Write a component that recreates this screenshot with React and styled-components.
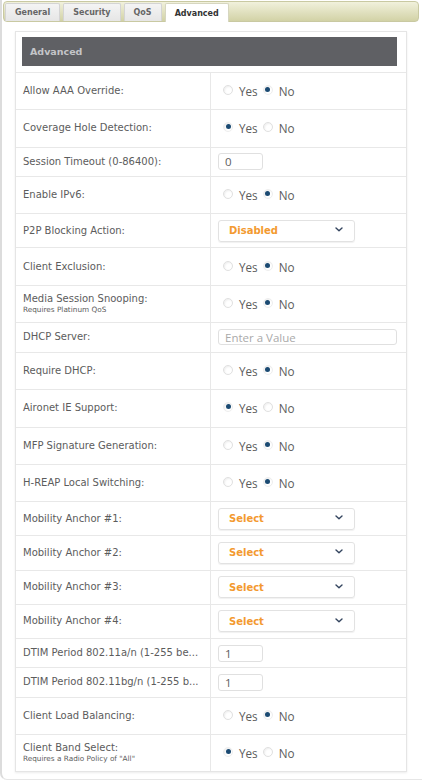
import React from "react";
import styled, { createGlobalStyle } from "styled-components";

const GlobalStyle = createGlobalStyle`
  * { box-sizing: border-box; }
  body {
    margin: 0;
    background: #fff;
    font-family: "DejaVu Sans", Verdana, sans-serif;
  }
`;

const tabs = ["General", "Security", "QoS", "Advanced"];

const rows = [
  { label: "Allow AAA Override:", type: "radio", value: "no" },
  { label: "Coverage Hole Detection:", type: "radio", value: "yes" },
  { label: "Session Timeout (0-86400):", type: "input", value: "0" },
  { label: "Enable IPv6:", type: "radio", value: "no" },
  { label: "P2P Blocking Action:", type: "select", value: "Disabled" },
  { label: "Client Exclusion:", type: "radio", value: "no" },
  {
    label: "Media Session Snooping:",
    note: "Requires Platinum QoS",
    type: "radio",
    value: "no",
  },
  { label: "DHCP Server:", type: "wide", placeholder: "Enter a Value" },
  { label: "Require DHCP:", type: "radio", value: "no" },
  { label: "Aironet IE Support:", type: "radio", value: "yes" },
  { label: "MFP Signature Generation:", type: "radio", value: "no" },
  { label: "H-REAP Local Switching:", type: "radio", value: "no" },
  { label: "Mobility Anchor #1:", type: "select", value: "Select" },
  { label: "Mobility Anchor #2:", type: "select", value: "Select" },
  { label: "Mobility Anchor #3:", type: "select", value: "Select" },
  { label: "Mobility Anchor #4:", type: "select", value: "Select" },
  { label: "DTIM Period 802.11a/n (1-255 be...", type: "input", value: "1" },
  { label: "DTIM Period 802.11bg/n (1-255 b...", type: "input", value: "1" },
  { label: "Client Load Balancing:", type: "radio", value: "no" },
  {
    label: "Client Band Select:",
    note: 'Requires a Radio Policy of "All"',
    type: "radio",
    value: "yes",
  },
];

const rowHeights = {
  radio: 37.3,
  select: 34.2,
  input: 29.3,
  wide: 30,
};

function Chevron() {
  return (
    <svg width="8" height="5" viewBox="0 0 8 5">
      <path
        d="M1 1 L4 3.8 L7 1"
        fill="none"
        stroke="#34455f"
        strokeWidth="1.4"
        strokeLinecap="round"
        strokeLinejoin="round"
      />
    </svg>
  );
}

function YesNo({ value }) {
  return (
    <StyledRadioGroup>
      <StyledRadio $checked={value === "yes"} />
      <StyledRadioText>Yes</StyledRadioText>
      <StyledRadio $checked={value === "no"} />
      <StyledRadioText>No</StyledRadioText>
    </StyledRadioGroup>
  );
}

function Field({ row }) {
  if (row.type === "radio") return <YesNo value={row.value} />;
  if (row.type === "select")
    return (
      <StyledSelect>
        <span>{row.value}</span>
        <Chevron />
      </StyledSelect>
    );
  if (row.type === "wide")
    return <StyledInput $wide readOnly placeholder={row.placeholder} />;
  return <StyledInput readOnly value={row.value} />;
}

export default function App() {
  return (
    <>
      <GlobalStyle />
      <StyledFrame>
        <StyledTabBar>
          {tabs.map((t) => (
            <StyledTab key={t} $active={t === "Advanced"}>
              {t}
            </StyledTab>
          ))}
        </StyledTabBar>
        <StyledCard>
          <StyledHeader>Advanced</StyledHeader>
          {rows.map((row) => (
            <StyledRow key={row.label} $h={rowHeights[row.type]}>
              <StyledLabelCell>
                <StyledLabel>{row.label}</StyledLabel>
                {row.note && <StyledNote>{row.note}</StyledNote>}
              </StyledLabelCell>
              <StyledValueCell>
                <Field row={row} />
              </StyledValueCell>
            </StyledRow>
          ))}
        </StyledCard>
      </StyledFrame>
    </>
  );
}

const StyledFrame = styled.div`
  width: 422px;
  padding: 1px 3px 7px 1px;
  border-left: 2px solid #dcdcdc;
  border-bottom: 1px solid #e6e6e6;
  border-bottom-left-radius: 7px;
`;

const StyledTabBar = styled.div`
  height: 21px;
  display: flex;
  align-items: flex-end;
  padding-left: 1px;
  background-image: linear-gradient(#f1f1dc, #d2d2a6);
  border: 1px solid #c9c9a2;
  border-radius: 4px;
`;

const StyledTab = styled.div`
  height: ${(p) => (p.$active ? "19px" : "18px")};
  margin-right: 3px;
  margin-bottom: ${(p) => (p.$active ? "-1px" : "0")};
  padding: 0 9px;
  display: flex;
  align-items: center;
  font-family: "DejaVu Sans", Verdana, sans-serif;
  font-size: 8px;
  font-weight: 700;
  color: ${(p) => (p.$active ? "#333" : "#666")};
  background: ${(p) =>
    p.$active ? "#fff" : "linear-gradient(#f4f4f4, #e6e6e6)"};
  border: 1px solid ${(p) => (p.$active ? "#d6d6c0" : "#d4d4d4")};
  border-bottom: none;
  border-radius: 2px 2px 0 0;
`;

const StyledCard = styled.div`
  margin: 9px 12px 0 12px;
  padding-top: 5px;
  background: #fff;
  border: 1px solid #e5e5e5;
  box-shadow: 0 1px 2px rgba(0, 0, 0, 0.08);
`;

const StyledHeader = styled.div`
  height: 29px;
  margin: 0 9px 6px 6px;
  padding-left: 8px;
  display: flex;
  align-items: center;
  background: #5f6064;
  color: #c4c5c8;
  font-size: 9.5px;
  font-weight: 700;
`;

const StyledRow = styled.div`
  height: ${(p) => p.$h}px;
  display: grid;
  grid-template-columns: 195px 1fr;
  border-top: 1px solid #e8e8e8;
`;

const StyledLabelCell = styled.div`
  padding-left: 7px;
  display: flex;
  flex-direction: column;
  justify-content: center;
  border-right: 1px solid #e8e8e8;
  overflow: hidden;
`;

const StyledLabel = styled.div`
  font-size: 10px;
  line-height: 12px;
  color: #5c5c5c;
  white-space: nowrap;
`;

const StyledNote = styled.div`
  font-size: 7.3px;
  line-height: 10px;
  color: #5c5c5c;
  white-space: nowrap;
`;

const StyledValueCell = styled.div`
  padding-left: 7px;
  display: flex;
  align-items: center;
`;

const StyledRadioGroup = styled.div`
  padding-left: 5px;
  display: flex;
  align-items: center;
`;

const StyledRadio = styled.span`
  position: relative;
  width: 10px;
  height: 10px;
  margin-top: -2px;
  border-radius: 50%;
  background: #fff;
  border: 1px solid ${(p) => (p.$checked ? "#eeeeee" : "#e0e0e0")};
  box-shadow: inset 1px 1px 2px rgba(0, 0, 0, 0.07);

  &::after {
    content: "";
    display: ${(p) => (p.$checked ? "block" : "none")};
    position: absolute;
    left: 1.5px;
    top: 1px;
    width: 5px;
    height: 5px;
    border-radius: 50%;
    background: #1b4a72;
  }
`;

const StyledRadioText = styled.span`
  margin: 0 5px 0 6px;
  font-family: "Open Sans", sans-serif;
  font-size: 11.7px;
  color: #5c5c5c;
`;

const StyledInput = styled.input`
  width: ${(p) => (p.$wide ? "179px" : "45px")};
  height: ${(p) => (p.$wide ? "16px" : "17px")};
  padding: 0 6px;
  border: 1px solid #e0e0e0;
  border-radius: 3px;
  outline: none;
  font-family: "Open Sans", sans-serif;
  font-size: 11.5px;
  color: #5c5c5c;
  background: #fff;

  &::placeholder {
    color: #aaa;
  }
`;

const StyledSelect = styled.div`
  width: 137px;
  height: 22px;
  padding: 0 11px 0 10px;
  display: flex;
  align-items: center;
  justify-content: space-between;
  border: 1px solid #e2e2e2;
  border-radius: 3px;
  box-shadow: 0 1px 1px rgba(0, 0, 0, 0.06);
  font-size: 10px;
  font-weight: 700;
  color: #f39a30;

  svg {
    margin-top: -2px;
  }
`;
